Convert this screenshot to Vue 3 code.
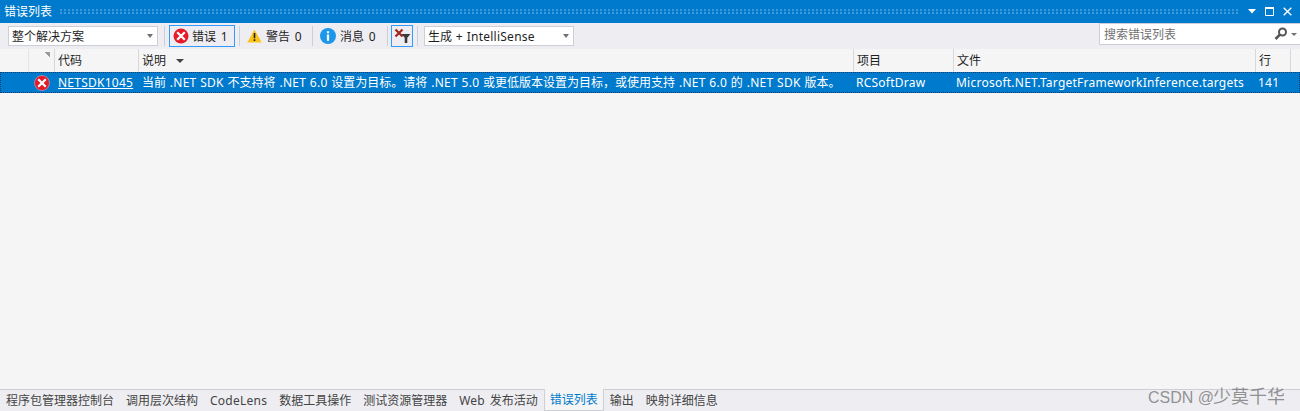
<script setup>
const columns = [
  { label: '', width: 29 },
  { label: '', width: 26, corner: true },
  { label: '代码', width: 84 },
  { label: '说明', width: 715, sorted: true },
  { label: '项目', width: 100 },
  { label: '文件', width: 302 },
  { label: '行', width: 35 },
]
const tabs = ['程序包管理器控制台', '调用层次结构', 'CodeLens', '数据工具操作', '测试资源管理器', 'Web 发布活动', '错误列表', '输出', '映射详细信息']
const activeTab = '错误列表'
const description = '当前 .NET SDK 不支持将 .NET 6.0 设置为目标。请将 .NET 5.0 或更低版本设置为目标，或使用支持 .NET 6.0 的 .NET SDK 版本。'

// Latin runs are set slightly wider than the CJK runs next to them
const segments = (text) =>
  text.match(/[\x20-\x7e]+|[^\x20-\x7e]+/g).map((value) => ({ value, latin: /^[\x20-\x7e]/.test(value) }))
</script>

<template>
  <div class="panel">
    <header class="title">
      <span class="title-text">错误列表</span>
      <span class="grip"></span>
      <div class="win-btns">
        <svg width="8" height="5" viewBox="0 0 8 5"><path d="M0 0h8L4 4.500z" fill="#fff"/></svg>
        <svg width="9" height="9" viewBox="0 0 9 9"><path d="M.5 1.500h8v7h-8z" fill="none" stroke="#fff"/><path d="M0 0h9v2H0z" fill="#fff"/></svg>
        <svg width="9" height="9" viewBox="0 0 9 9"><path d="M.7.7l7.600 7.600M8.300.7L.7 8.300" fill="none" stroke="#fff" stroke-width="1.400"/></svg>
      </div>
    </header>

    <div class="toolbar">
      <div class="combo scope">
        <span>整个解决方案</span>
        <i class="caret"></i>
      </div>
      <span class="sep first"></span>
      <button class="tool on errors">
        <svg width="16" height="16" viewBox="0 0 16 16"><circle cx="8" cy="8" r="7.500" fill="#e51a2a"/><path d="M5 5l6 6M11 5l-6 6" stroke="#fff" stroke-width="2.200" stroke-linecap="square"/></svg>
        <span>错误<span class="latin"> 1</span></span>
      </button>
      <span class="sep after-btn"></span>
      <button class="tool warnings">
        <svg width="15" height="14" viewBox="0 0 15 14"><path d="M7.500 .5L14.800 13.500H.2z" fill="#fcc419"/><path d="M6.700 4h1.600v5.200H6.700zM6.700 10.200h1.600v1.700H6.700z" fill="#1e1e1e"/></svg>
        <span>警告<span class="latin"> 0</span></span>
      </button>
      <span class="sep"></span>
      <button class="tool infos">
        <svg width="16" height="16" viewBox="0 0 16 16"><circle cx="8" cy="8" r="8" fill="#1c97ea"/><path d="M6.900 3.200h2.200v2H6.900zM6.900 6.500h2.200v6.200H6.900z" fill="#fff"/></svg>
        <span>消息<span class="latin"> 0</span></span>
      </button>
      <span class="sep"></span>
      <button class="tool on filter">
        <svg width="20" height="20" viewBox="0 0 20 20"><path d="M3.500 3.500l7 7M10.500 3.500l-7 7" stroke="#a1261c" stroke-width="2.200"/><path d="M9.500 8h9l-3.200 3.700V17h-2.600v-5.300z" fill="#3a3a3a"/></svg>
      </button>
      <span class="sep after-btn"></span>
      <div class="combo build">
        <span>生成<span class="latin"> + IntelliSense</span></span>
        <i class="caret"></i>
      </div>
      <div class="search">
        <span>搜索错误列表</span>
        <svg width="14" height="14" viewBox="0 0 14 14"><circle cx="8.500" cy="5" r="3.500" fill="none" stroke="#555" stroke-width="2"/><path d="M6 7.500L1.500 12" stroke="#555" stroke-width="2.500"/></svg>
        <i class="caret small"></i>
      </div>
    </div>

    <div class="head">
      <div v-for="(c, i) in columns" :key="i" class="hcell" :style="{ width: c.width + 'px' }">
        <i v-if="c.corner" class="corner"></i>
        <span>{{ c.label }}</span>
        <i v-if="c.sorted" class="sort"></i>
      </div>
    </div>

    <div class="body">
      <div class="row">
        <div class="cell icon-cell">
          <svg width="16" height="16" viewBox="0 0 16 16"><circle cx="8" cy="8" r="7.500" fill="#e51a2a"/><circle cx="8" cy="8" r="7.500" fill="none" stroke="#fff" stroke-opacity=".35"/><path d="M5 5l6 6M11 5l-6 6" stroke="#fff" stroke-width="2.200" stroke-linecap="square"/></svg>
        </div>
        <div class="cell code latin"><u>NETSDK1045</u></div>
        <div class="cell desc"><span v-for="(s, i) in segments(description)" :key="i" :class="{ latin: s.latin }">{{ s.value }}</span></div>
        <div class="cell project latin">RCSoftDraw</div>
        <div class="cell file latin">Microsoft.NET.TargetFrameworkInference.targets</div>
        <div class="cell line latin">141</div>
      </div>
    </div>

    <footer class="tabs">
      <span v-for="t in tabs" :key="t" class="tab" :class="{ active: t === activeTab }"><span v-for="(s, i) in segments(t)" :key="i" :class="{ latin: s.latin }">{{ s.value }}</span></span>
    </footer>

    <div class="watermark">CSDN @<span class="wm-cjk">少莫千华</span></div>
  </div>
</template>

<style>
html, body { margin: 0; padding: 0; background: #eeeef2; }
</style>

<style scoped>
.panel {
  position: relative;
  width: 1300px;
  height: 411px;
  display: flex;
  flex-direction: column;
  overflow: hidden;
  font-family: "Noto Sans", "Noto Sans CJK SC", sans-serif;
  font-size: 12px;
  color: #1e1e1e;
  background: #eeeef2;
}
.latin { letter-spacing: .24px; word-spacing: .45px; }
.tab .latin, .tool .latin { word-spacing: 1.4px; }
.title {
  height: 23px;
  flex: none;
  background: #007acc;
  display: flex;
  align-items: center;
  padding: 0 8px 0 4px;
  box-sizing: border-box;
  color: #fff;
}
.title-text { line-height: 23px; }
.grip {
  flex: 1;
  height: 6px;
  margin: 1px 8px 0 8px;
  background-image: radial-gradient(circle at 1px 1px, #3f9bdb .7px, transparent 1px);
  background-size: 4px 3px;
}
.win-btns { display: flex; align-items: center; gap: 9px; }
.toolbar {
  height: 26px;
  flex: none;
  display: flex;
  align-items: center;
  padding-left: 8px;
  box-sizing: border-box;
}
.combo {
  height: 20px;
  box-sizing: border-box;
  background: #fff;
  border: 1px solid #ccced8;
  display: flex;
  align-items: center;
  justify-content: space-between;
  padding: 0 4px 0 3px;
  white-space: nowrap;
  flex: none;
}
.scope { width: 150px; }
.build { width: 150px; margin-left: 3px; }
.caret {
  width: 0;
  height: 0;
  border: 3.500px solid transparent;
  border-top: 4px solid #717171;
  border-bottom: 0;
}
.caret.small { border-width: 3px 3px 0; border-top-color: #717171; border-bottom: 0; margin-left: 3px; }
.sep { width: 1px; height: 20px; background: #ccced8; margin: 0 3px; flex: none; }
.sep.first { margin-left: 6px; }
.sep.after-btn { margin-left: 4px; }
.tool {
  font: inherit;
  color: inherit;
  height: 22px;
  box-sizing: border-box;
  border: 1px solid transparent;
  background: transparent;
  padding: 0 3px;
  display: flex;
  align-items: center;
  gap: 3px;
  white-space: nowrap;
  flex: none;
}
.tool.on { border-color: #3399ff; }
.errors { width: 66px; margin-left: 1px; }
.warnings { width: 66px; gap: 4px; }
.infos { width: 68px; gap: 4px; }
.filter { width: 22px; padding: 0; }
.search {
  margin-left: auto;
  margin-bottom: 4px;
  width: 201px;
  height: 22px;
  box-sizing: border-box;
  background: #fff;
  border: 1px solid #ccced8;
  border-right: 0;
  display: flex;
  align-items: center;
  padding: 0 3px 0 4px;
  color: #717171;
}
.search span { flex: 1; }
.head {
  height: 23px;
  flex: none;
  display: flex;
  background: #f5f5f5;
}
.hcell {
  position: relative;
  box-sizing: border-box;
  border-right: 1px solid #d6d7df;
  padding: 0 3px;
  line-height: 23px;
  flex: none;
  display: flex;
  align-items: center;
  gap: 10px;
}
.hcell:first-child { border-right-color: #e4e4ea; }
.corner {
  position: absolute;
  top: 3px;
  right: 4px;
  width: 6px;
  height: 6px;
  background: linear-gradient(to bottom left, #9a9a9a 50%, transparent 50%);
}
.sort {
  width: 0;
  height: 0;
  border: 4px solid transparent;
  border-top: 4px solid #444;
  border-bottom: 0;
}
.body {
  flex: 1;
  background: #f5f5f5;
  border-bottom: 1px solid #ccced8;
}
.row {
  height: 21px;
  background: #007acc;
  color: #fff;
  display: flex;
  align-items: center;
  outline: 1px dotted #003f70;
  outline-offset: -1px;
  white-space: nowrap;
}
.cell { flex: none; box-sizing: border-box; padding: 0 3px; line-height: 21px; overflow: hidden; }
.icon-cell { width: 54px; padding: 0 0 0 34px; display: flex; align-items: center; }
.code { width: 84px; padding-left: 4px; }
.desc { width: 714px; padding-left: 4px; padding-right: 0; }
.project { width: 100px; padding-left: 4px; }
.file { width: 302px; padding-left: 4px; }
.line { width: 35px; padding-left: 4px; }
.tabs {
  height: 21px;
  flex: none;
  display: flex;
  background: #eeeef2;
}
.tab {
  padding: 0 6px;
  line-height: 21px;
  color: #444;
  white-space: nowrap;
}
.tab.active {
  color: #007acc;
  background: #f5f5f5;
  margin-top: -1px;
  line-height: 22px;
  border: 1px solid #ccced8;
  border-top: 0;
  padding: 0 5px;
}
.watermark {
  position: absolute;
  right: 15px;
  bottom: 3px;
  font-family: "Liberation Sans", "Noto Sans CJK SC", sans-serif;
  font-size: 16px;
  line-height: 20px;
  color: rgba(120, 120, 120, .8);
}
.wm-cjk { font-size: 18px; margin-left: -1px; }
</style>
